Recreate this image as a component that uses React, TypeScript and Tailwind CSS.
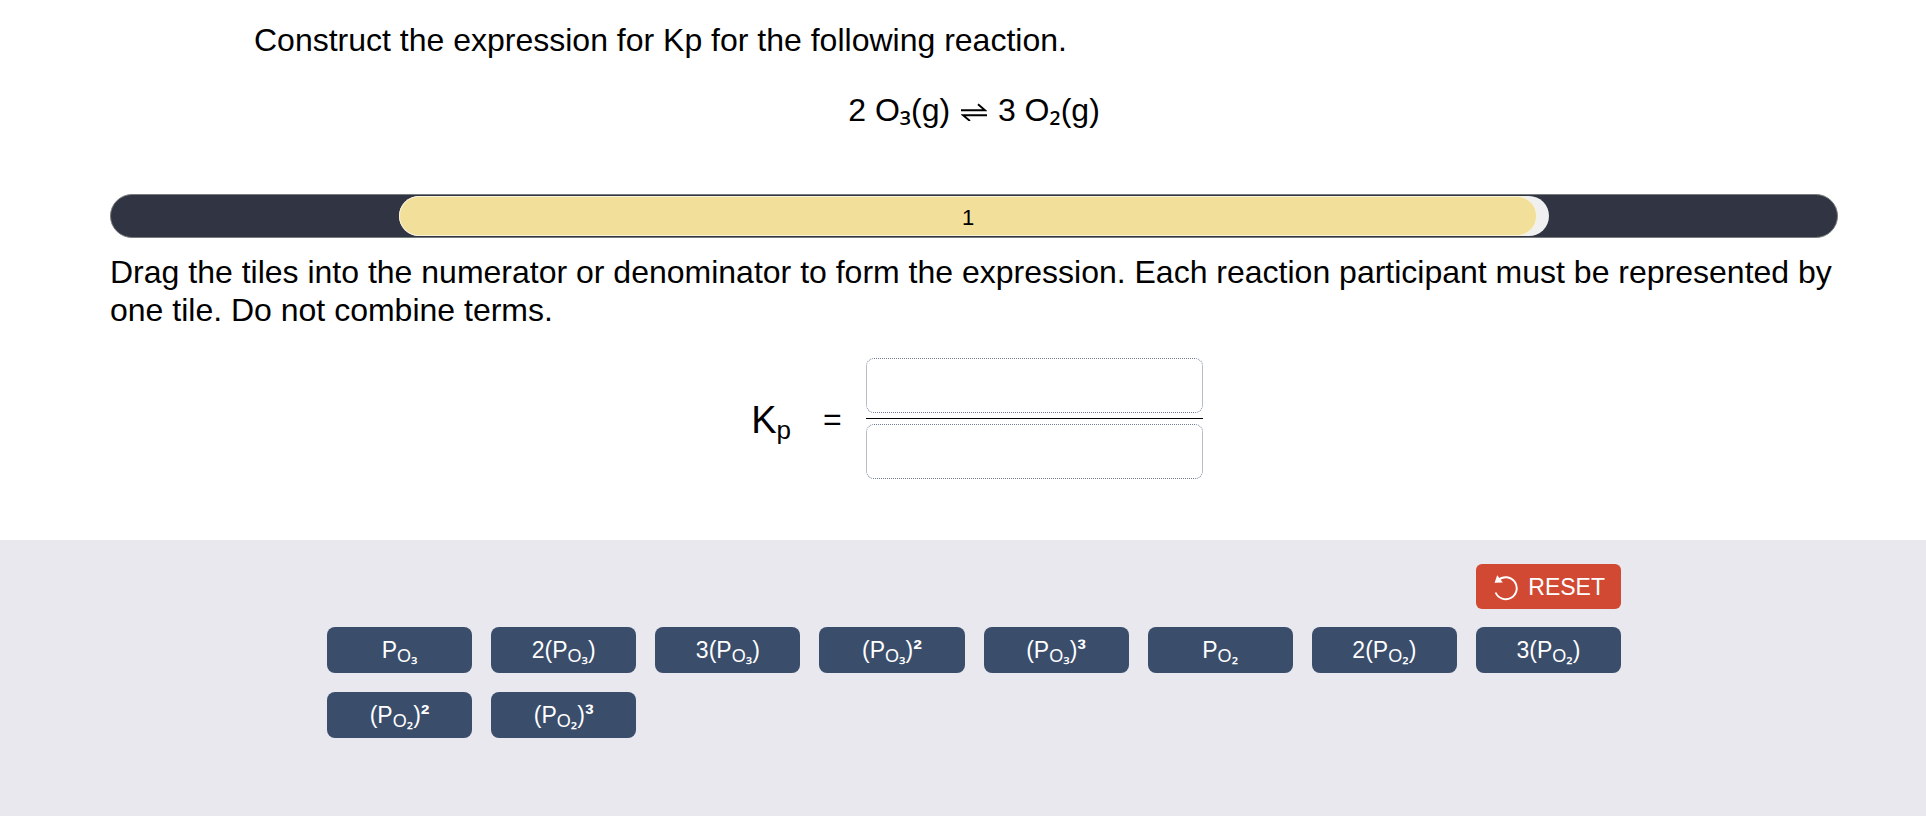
import { useState } from 'react';

interface Tile {
  id: string;
  coefficient?: string;
  species: '₂' | '₃';
  power?: string;
}

const tiles: Tile[] = [
  { id: 'o3', species: '₃' },
  { id: '2o3', coefficient: '2', species: '₃' },
  { id: '3o3', coefficient: '3', species: '₃' },
  { id: 'o3-2', species: '₃', power: '²' },
  { id: 'o3-3', species: '₃', power: '³' },
  { id: 'o2', species: '₂' },
  { id: '2o2', coefficient: '2', species: '₂' },
  { id: '3o2', coefficient: '3', species: '₂' },
  { id: 'o2-2', species: '₂', power: '²' },
  { id: 'o2-3', species: '₂', power: '³' },
];

function Digit({ children }: { children: string }) {
  return <span className="font-['Noto_Sans',sans-serif] leading-none">{children}</span>;
}

function TileLabel({ tile }: { tile: Tile }) {
  const wrapped = tile.coefficient || tile.power;
  return (
    <span className="whitespace-nowrap">
      {tile.coefficient}
      {wrapped && '('}P
      <sub className="bottom-0 align-[-4px] text-[18px] font-medium leading-none">
        O<Digit>{tile.species}</Digit>
      </sub>
      {wrapped && ')'}
      {tile.power && <span className="text-[26px] font-bold leading-none">{tile.power}</span>}
    </span>
  );
}

function DropBox({ label, placed }: { label: string; placed: Tile[] }) {
  return (
    <div
      aria-label={label}
      className="flex h-[55px] items-center justify-center gap-2 rounded-lg border border-dotted border-[#6f7d96] text-2xl"
    >
      {placed.map((tile) => (
        <TileLabel key={tile.id} tile={tile} />
      ))}
    </div>
  );
}

function ResetIcon() {
  return (
    <svg viewBox="0 0 24 26" className="h-[26px] w-6" aria-hidden="true">
      <path d="M1.6 17.5A11 11 0 1 0 4.2 5.2" fill="none" stroke="currentColor" strokeWidth="1.9" />
      <path d="M3.2 0.3 8.8 7.4 0.6 7.8Z" fill="currentColor" />
    </svg>
  );
}

export default function App() {
  const [numerator, setNumerator] = useState<Tile[]>([]);

  return (
    <div className="flex min-h-screen flex-col bg-white font-['Liberation_Sans',Arial,sans-serif] text-black">
      <main className="flex h-[540px] flex-col pl-[110px] pr-[88px] pt-[21px]">
        <h1 className="pl-36 text-[32px] leading-[38px]">
          Construct the expression for Kp for the following reaction.
        </h1>
        <p className="mt-8 text-center text-[32px] leading-[38px]">
          2 O<Digit>₃</Digit>(g){' '}
          <svg
            viewBox="0 0 26 20"
            className="mx-0.5 inline h-5 w-[26px] align-baseline"
            role="img"
            aria-label="equilibrium"
          >
            <path d="M0 9.3H24L17 3.2M26 14.2H2L9 20" fill="none" stroke="currentColor" strokeWidth="1.9" />
          </svg>{' '}
          3 O<Digit>₂</Digit>(g)
        </p>

        <div className="mt-[65px] flex h-11 justify-center rounded-full border border-[#777c7a] bg-[#313543] py-px">
          <div className="w-2/3 rounded-full bg-[#f0f0f0] pr-3">
            <div className="flex h-full items-center justify-center rounded-full border border-[#faf3d7] bg-[#f2df9a] pt-0.5 text-[22px]">
              1
            </div>
          </div>
        </div>

        <p className="mt-[15px] text-[32px] leading-[38px]">
          Drag the tiles into the numerator or denominator to form the expression. Each reaction participant must be
          represented by one tile. Do not combine terms.
        </p>

        <div className="mt-[29px] flex items-center justify-center pl-1.5">
          <span className="pt-1.5 text-[38px] leading-none">
            K<sub className="bottom-0 align-[-6px] text-[26px] leading-none">p</sub>
          </span>
          <span className="ml-8 mr-6 text-[32px] leading-none">=</span>
          <div className="w-[337px]">
            <DropBox label="Numerator" placed={numerator} />
            <div className="my-[5px] h-px bg-black" />
            <DropBox label="Denominator" placed={[]} />
          </div>
        </div>
      </main>

      <section className="flex-1 bg-[#e9e8ee] pl-[327px] pr-[305px] pt-6">
        <div className="mb-[18px] grid grid-cols-8 gap-x-[19px]">
          <button
            type="button"
            onClick={() => setNumerator([])}
            className="col-start-8 flex h-[45px] items-center justify-end gap-2.5 rounded-md bg-[#d24933] pr-4 pt-0.5 text-[23px] text-white"
          >
            <ResetIcon />
            RESET
          </button>
        </div>
        <div className="grid grid-cols-8 gap-[19px]">
          {tiles.map((tile) => (
            <button
              key={tile.id}
              type="button"
              onClick={() => setNumerator([...numerator.filter((t) => t.id !== tile.id), tile])}
              className="h-[46px] rounded-lg bg-[#3a4d6b] text-[23px] text-white"
            >
              <TileLabel tile={tile} />
            </button>
          ))}
        </div>
      </section>
    </div>
  );
}
